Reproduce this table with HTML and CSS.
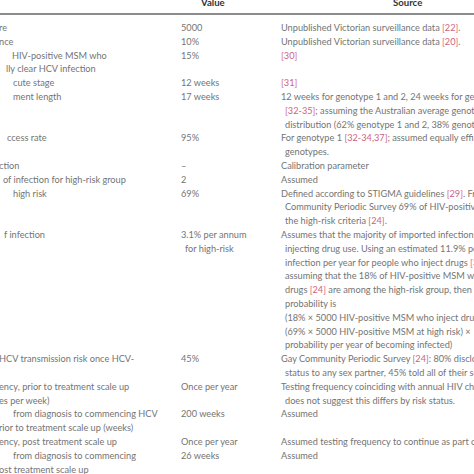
FILE: index.html
```html
<!DOCTYPE html>
<html lang="en">
<head>
<meta charset="utf-8">
<title>Model parameters</title>
<link rel="stylesheet" href="styles.css">
</head>
<body>
<div class="table">
  <div class="row head">
    <div class="cell"></div>
    <div class="cell h-value">Value</div>
    <div class="cell h-source">Source</div>
  </div>

  <div class="row">
    <div class="cell p"><span class="x0">re</span></div>
    <div class="cell">5000</div>
    <div class="cell">Unpublished Victorian surveillance data <span class="ref">[22]</span>.</div>
  </div>
  <div class="row">
    <div class="cell p"><span class="x0">nce</span></div>
    <div class="cell">10%</div>
    <div class="cell">Unpublished Victorian surveillance data <span class="ref">[20]</span>.</div>
  </div>
  <div class="row">
    <div class="cell p"><span class="x12">HIV-positive MSM who</span><br><span class="x6">lly clear HCV infection</span></div>
    <div class="cell">15%</div>
    <div class="cell"><span class="ref">[30]</span></div>
  </div>
  <div class="row">
    <div class="cell p"><span class="x13">cute stage</span></div>
    <div class="cell">12 weeks</div>
    <div class="cell"><span class="ref">[31]</span></div>
  </div>
  <div class="row">
    <div class="cell p"><span class="x13">ment length</span></div>
    <div class="cell">17 weeks</div>
    <div class="cell">12 weeks for genotype 1 and 2, 24 weeks for genotype 3<br><span class="ref">[32-35]</span>; assuming the Australian average genotype<br>distribution (62% genotype 1 and 2, 38% genotype 3)</div>
  </div>
  <div class="row">
    <div class="cell p"><span class="x7">ccess rate</span></div>
    <div class="cell">95%</div>
    <div class="cell">For genotype 1 <span class="ref">[32-34,37]</span>; assumed equally efficacious for all<br>genotypes.</div>
  </div>
  <div class="row">
    <div class="cell p"><span class="x0">ction</span></div>
    <div class="cell">–</div>
    <div class="cell">Calibration parameter</div>
  </div>
  <div class="row">
    <div class="cell p"><span class="x3">of infection for high-risk group</span></div>
    <div class="cell">2</div>
    <div class="cell">Assumed</div>
  </div>
  <div class="row">
    <div class="cell p"><span class="x13">high risk</span></div>
    <div class="cell">69%</div>
    <div class="cell">Defined according to STIGMA guidelines <span class="ref">[29]</span>. From Gay<br>Community Periodic Survey 69% of HIV-positive MSM met<br>the high-risk criteria <span class="ref">[24]</span>.</div>
  </div>
  <div class="row">
    <div class="cell p"><span class="x4">f infection</span></div>
    <div class="cell">3.1% per annum<br>for high-risk</div>
    <div class="cell">Assumes that the majority of imported infections occur through<br>injecting drug use. Using an estimated 11.9% per annum risk of<br>infection per year for people who inject drugs <span class="ref">[33]</span>, and<br>assuming that the 18% of HIV-positive MSM who inject<br>drugs <span class="ref">[24]</span> are among the high-risk group, then the<br>probability is<br>(18% × 5000 HIV-positive MSM who inject drugs ×<br>(69% × 5000 HIV-positive MSM at high risk) ×<br>probability per year of becoming infected)</div>
  </div>
  <div class="row">
    <div class="cell p"><span class="x0">HCV transmission risk once HCV-</span></div>
    <div class="cell">45%</div>
    <div class="cell">Gay Community Periodic Survey <span class="ref">[24]</span>: 80% disclosed their<br>status to any sex partner, 45% told all of their sex partners</div>
  </div>
  <div class="row">
    <div class="cell p"><span class="x0">ency, prior to treatment scale up</span><br><span class="x0">es per week)</span></div>
    <div class="cell">Once per year</div>
    <div class="cell">Testing frequency coinciding with annual HIV check; data<br>does not suggest this differs by risk status.</div>
  </div>
  <div class="row">
    <div class="cell p"><span class="x13">from diagnosis to commencing HCV</span><br><span class="x0">rior to treatment scale up (weeks)</span></div>
    <div class="cell">200 weeks</div>
    <div class="cell">Assumed</div>
  </div>
  <div class="row">
    <div class="cell p"><span class="x0">ency, post treatment scale up</span></div>
    <div class="cell">Once per year</div>
    <div class="cell">Assumed testing frequency to continue as part of routine care</div>
  </div>
  <div class="row">
    <div class="cell p"><span class="x13">from diagnosis to commencing</span><br><span class="x0">ost treatment scale up</span></div>
    <div class="cell">26 weeks</div>
    <div class="cell">Assumed</div>
  </div>
</div>
</body>
</html>
```

FILE: styles.css
```css
html, body {
  margin: 0;
  padding: 0;
  background: #ffffff;
  overflow: hidden;
}

body {
  width: 474px;
  height: 474px;
  font-family: Lato, "Noto Sans", sans-serif;
  font-size: 9.2px;
  line-height: 13.8px;
  color: #747474;
}

.table {
  display: flex;
  flex-direction: column;
  margin-top: -4px;
}

.row {
  display: grid;
  grid-template-columns: 181px 100px 1fr;
}

.cell {
  white-space: nowrap;
  padding-left: 4px;
  text-indent: -4px;
}

.cell.p {
  padding-left: 0;
  text-indent: 0;
}

.head {
  border-bottom: 2px solid #8c8c8c;
  padding-bottom: 3px;
  margin-bottom: 6px;
  color: #333333;
  font-weight: 700;
  font-size: 9.6px;
  line-height: 14px;
}

.h-value { padding-left: 24px; }
.h-source { padding-left: 116px; }

.ref { color: #cf5f7f; }

.x0 { margin-left: -1px; }
.x3 { margin-left: 3px; }
.x4 { margin-left: 4px; }
.x6 { margin-left: 6px; }
.x7 { margin-left: 7px; }
.x12 { margin-left: 12px; }
.x13 { margin-left: 13px; }
```
